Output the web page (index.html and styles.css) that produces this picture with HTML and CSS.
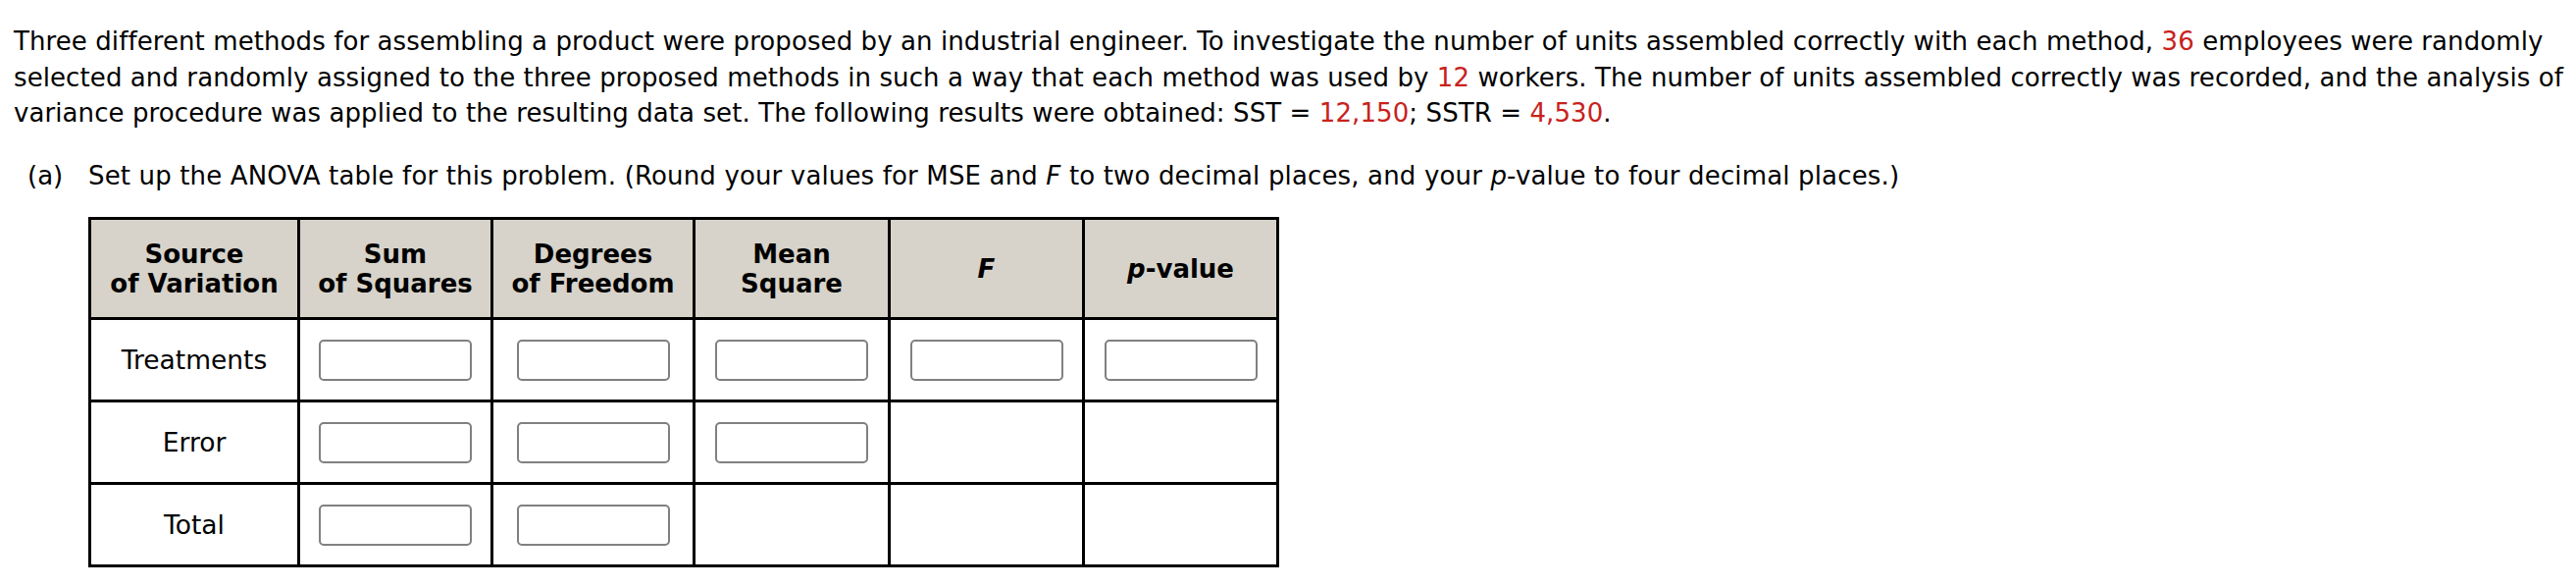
FILE: index.html
```html
<!DOCTYPE html>
<html>
<head>
<meta charset="utf-8">
<link rel="stylesheet" href="styles.css">
</head>
<body>
<div class="question">
  <p class="stem">Three different methods for assembling a product were proposed by an industrial engineer. To investigate the number of units assembled correctly with each method, <span class="num">36</span> employees were randomly<br>selected and randomly assigned to the three proposed methods in such a way that each method was used by <span class="num">12</span> workers. The number of units assembled correctly was recorded, and the analysis of<br>variance procedure was applied to the resulting data set. The following results were obtained: SST = <span class="num">12,150</span>; SSTR = <span class="num">4,530</span>.</p>
  <div class="part">
    <span class="label">(a)</span>
    <div class="part-body">
      <p class="prompt">Set up the ANOVA table for this problem. (Round your values for MSE and <i>F</i> to two decimal places, and your <i>p</i>-value to four decimal places.)</p>
      <table class="anova">
        <colgroup>
          <col class="c1"><col class="c2"><col class="c3"><col class="c4"><col class="c5"><col class="c6">
        </colgroup>
        <thead>
          <tr>
            <th>Source<br>of Variation</th>
            <th>Sum<br>of Squares</th>
            <th>Degrees<br>of Freedom</th>
            <th>Mean<br>Square</th>
            <th><i>F</i></th>
            <th><i>p</i>-value</th>
          </tr>
        </thead>
        <tbody>
          <tr>
            <td>Treatments</td>
            <td><span class="box"></span></td>
            <td><span class="box"></span></td>
            <td><span class="box"></span></td>
            <td><span class="box"></span></td>
            <td><span class="box"></span></td>
          </tr>
          <tr>
            <td>Error</td>
            <td><span class="box"></span></td>
            <td><span class="box"></span></td>
            <td><span class="box"></span></td>
            <td></td>
            <td></td>
          </tr>
          <tr>
            <td>Total</td>
            <td><span class="box"></span></td>
            <td><span class="box"></span></td>
            <td></td>
            <td></td>
            <td></td>
          </tr>
        </tbody>
      </table>
    </div>
  </div>
</div>
</body>
</html>
```
FILE: styles.css
```css
html, body {
  margin: 0;
  padding: 0;
  background: #ffffff;
}
body {
  font-family: "DejaVu Sans", Verdana, sans-serif;
  color: #000000;
}
.question {
  padding: 24px 0 0 14px;
}
.stem {
  margin: 0;
  font-size: 26px;
  line-height: 36.5px;
  letter-spacing: 0.09px;
  white-space: nowrap;
}
.num {
  color: #c8221c;
}
.part {
  display: flex;
  margin-top: 27px;
  font-size: 26px;
  line-height: 36.5px;
}
.label {
  margin-left: 14px;
  width: 62px;
  flex: none;
}
.prompt {
  margin: 0 0 24px 0;
  letter-spacing: 0.15px;
  white-space: nowrap;
}
.anova {
  border-collapse: collapse;
  table-layout: fixed;
  width: 1211px;
  font-size: 26.5px;
  line-height: 30px;
  letter-spacing: 0;
}
.c1 { width: 213px; }
.c2 { width: 197px; }
.c3 { width: 206px; }
.c4 { width: 199px; }
.c5 { width: 198px; }
.c6 { width: 198px; }
.anova th, .anova td {
  border: 3px solid #000000;
  text-align: center;
  vertical-align: middle;
  padding: 0;
}
.anova th {
  background: #d7d3ca;
  height: 99px;
  font-weight: bold;
  font-size: 26px;
}
.anova td {
  height: 81px;
}
.box {
  display: inline-block;
  vertical-align: middle;
  width: 152px;
  height: 38px;
  border: 2px solid #808080;
  border-radius: 5px;
  background: #ffffff;
}
```
